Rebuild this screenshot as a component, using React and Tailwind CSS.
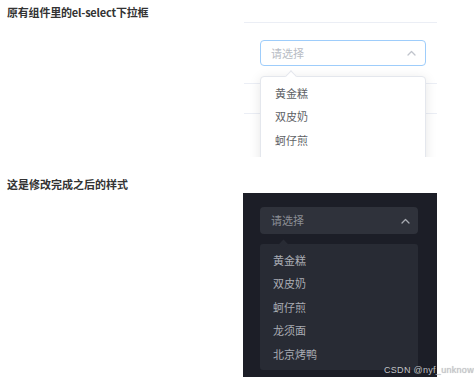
import React from "react";

const Chevron = ({ color }) => (
  <svg width="9" height="6" viewBox="0 0 9 6" fill="none">
    <polyline points="1,5 4.5,1.5 8,5" stroke={color} strokeWidth="1.3" strokeLinecap="round" strokeLinejoin="round" />
  </svg>
);

export default function App() {
  const font = { fontFamily: '"Noto Sans CJK SC", "Noto Sans", sans-serif' };
  const lightItems = ["黄金糕", "双皮奶", "蚵仔煎", "龙须面", "北京烤鸭"];
  return (
    <div className="relative w-[474px] h-[380px] overflow-hidden bg-white" style={font}>
      {/* Section 1 */}
      <div className="flex h-[170px]">
        <div className="w-[237px] pl-[7px] pt-[4px]">
          <div className="text-[11px] font-bold leading-[16px] text-[#333] tracking-[-0.2px]">原有组件里的el-select下拉框</div>
        </div>
        <div className="relative ml-[7px] w-[193px] h-[157px] overflow-hidden">
          <div className="mt-[22px] border-t border-[#ebeef5] h-[62px] border-b pl-[16px] pt-[17px]">
            <div className="w-[166px] h-[26px] rounded-[4px] border border-[#9ecdfb] flex items-center justify-between pl-[10px] pr-[9px]">
              <span className="text-[11px] text-[#b8bcc4]">请选择</span>
              <Chevron color="#c0c4cc" />
            </div>
          </div>
          <div className="h-[30px] border-b border-[#ebeef5]" />
          <div className="absolute left-[16px] top-[76px] w-[166px] h-[120px] bg-white rounded-[4px] border border-[#e4e7ed] shadow-[0_2px_12px_rgba(0,0,0,0.1)] py-[4px]">
            <div className="absolute left-[26px] -top-[5px] w-[8px] h-[8px] rotate-45 bg-white border-l border-t border-[#e4e7ed]" />
            {lightItems.slice(0, 3).map((t) => (
              <div key={t} className="h-[23.5px] flex items-center pl-[14px] text-[11px] text-[#606266]">{t}</div>
            ))}
          </div>
        </div>
      </div>

      {/* Section 2 */}
      <div className="flex">
        <div className="w-[237px] pl-[7px] pt-[6px]">
          <div className="text-[11px] font-bold leading-[16px] text-[#333]">这是修改完成之后的样式</div>
        </div>
        <div className="relative ml-[6px] mt-[23px] w-[194px] h-[184px] bg-[#1c1e27] pl-[17px] pt-[14px]">
          <div className="w-[158px] h-[27px] rounded-[4px] bg-[#2f323b] flex items-center justify-between pl-[11px] pr-[8px]">
            <span className="text-[11px] text-[#8c8f96]">请选择</span>
            <Chevron color="#a8abb2" />
          </div>
          <div className="relative mt-[10px] w-[158px] rounded-[3px] bg-[#282b34] py-[4px]">
            <div className="absolute left-[20px] -top-[3px] w-[7px] h-[7px] rotate-45 bg-[#282b34]" />
            {lightItems.map((t) => (
              <div key={t} className="h-[23.5px] flex items-center pl-[13px] text-[11px] text-[#a9acb3]">{t}</div>
            ))}
          </div>
        </div>
      </div>

      <div
        className="absolute left-[384px] top-[364px] text-[9px] leading-[12px] text-[#c4c6c9] whitespace-nowrap tracking-[0.3px]"
        style={{ fontFamily: '"Liberation Sans", Arial, sans-serif', textShadow: "0 0 1px rgba(0,0,0,0.25)" }}
      >
        CSDN @nyf_unknown
      </div>
    </div>
  );
}
